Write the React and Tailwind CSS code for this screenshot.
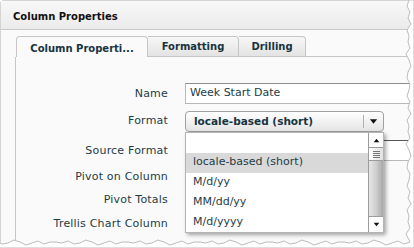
import React from "react";

const FONT = { fontFamily: '"DejaVu Sans", Verdana, sans-serif' };

const LABELS = [
  { text: "Source Format", cls: "h-[21px] mt-[8px]" },
  { text: "Pivot on Column", cls: "h-[20px] mt-[6px]" },
  { text: "Pivot Totals", cls: "h-[20px] mt-[3px]" },
  { text: "Trellis Chart Column", cls: "h-[20px] mt-[4px]" },
];

const OPTIONS = ["", "locale-based (short)", "M/d/yy", "MM/dd/yy", "M/d/yyyy"];

function jaggedPath() {
  // deterministic torn edge along right and bottom
  const right = [];
  const xs = [409, 407, 410, 408, 411, 407, 409, 408, 410, 406, 409, 411, 408, 407, 410];
  for (let i = 0; i <= 40; i++) {
    right.push(`${xs[i % xs.length]} ${i * 6}`);
  }
  const bottom = [];
  const ys = [242, 244, 241, 243, 245, 242, 240, 243, 244, 241, 243, 242];
  for (let i = 0; i <= 70; i++) {
    bottom.push(`${410 - i * 6} ${ys[i % ys.length]}`);
  }
  return `M414 0 L${right.join(" L")} L${bottom.join(" L")} L0 248 L414 248 Z`;
}

function Arrow({ up = false, size = "small" }) {
  const w = size === "small" ? 7 : 9;
  return (
    <svg width={w} height={w - 2} viewBox="0 0 10 7" className="block">
      {up ? <path d="M5 1 L9 6 L1 6 Z" fill="#111" /> : <path d="M1 1 L9 1 L5 6 Z" fill="#111" />}
    </svg>
  );
}

export default function App() {
  return (
    <div className="relative w-[414px] h-[248px] overflow-hidden bg-white" style={FONT}>
      <div className="h-full border-l border-t border-[#d4d4d4] rounded-tl-[4px] bg-[#fafafa] flex flex-col">
        {/* header */}
        <div className="h-[29px] shrink-0 flex items-center pl-[12px] pt-[2px] bg-gradient-to-b from-[#f8f8f8] to-[#ebebeb] border-b border-[#c9c9c9]">
          <span className="text-[10px] font-bold text-[#111]">Column Properties</span>
        </div>

        {/* tabs */}
        <div className="flex items-end pt-[5px] pl-[15px] h-[27px] shrink-0">
          <div className="h-[21px] w-[132px] flex items-center justify-center pt-[2px] bg-[#fafafa] border border-b-0 border-[#c6c6c6] rounded-t-[4px] text-[10px] font-bold text-[#17343f]">
            Column Properti...
          </div>
          <div className="h-[21px] w-[91px] flex items-center justify-center bg-gradient-to-b from-[#f7f7f7] to-[#e3e3e3] border border-l-0 border-[#c6c6c6] rounded-tr-[4px] text-[10px] font-bold text-[#17343f]">
            Formatting
          </div>
          <div className="h-[21px] w-[67px] flex items-center justify-center bg-gradient-to-b from-[#f7f7f7] to-[#e3e3e3] border border-l-0 border-[#c6c6c6] rounded-tr-[4px] text-[10px] font-bold text-[#17343f]">
            Drilling
          </div>
          <div className="flex-1 h-[21px] border-b border-[#c6c6c6]" />
        </div>

        {/* panel */}
        <div className="relative flex-1 ml-[14px] border-l border-[#c6c6c6] pt-[26px]">
          <div className="flex flex-col text-[11px] text-[#1e3c46] tracking-[0.2px]">
            <div className="flex items-center h-[21px]">
              <span className="w-[152px] text-right shrink-0 pt-[1px]">Name</span>
              <div className="ml-[17px] flex-1 h-[21px] bg-white border border-[#b8b8b8] border-t-[#8e8e8e] flex items-center pl-[4px] tracking-normal">
                Week Start Date
              </div>
            </div>
            <div className="flex items-center h-[21px] mt-[7px]">
              <span className="w-[152px] text-right shrink-0 -mt-[1px]">Format</span>
              <div className="ml-[17px] w-[199px] h-[21px] rounded-[4px] border border-[#a0a0a0] bg-gradient-to-b from-white to-[#e4e4e4] flex items-center tracking-normal">
                <span className="flex-1 pl-[8px] font-bold text-[10.5px] text-[#17343f]">locale-based (short)</span>
                <div className="w-px h-[13px] bg-[#b0b0b0]" />
                <div className="w-[19px] flex items-center justify-center">
                  <Arrow size="big" />
                </div>
              </div>
            </div>
            {LABELS.map((l, i) => (
              <div key={l.text} className={`flex items-center ${l.cls}`}>
                <span className="w-[152px] text-right shrink-0 pt-[1px]">{l.text}</span>
                {i === 0 && (
                  <div className="ml-[17px] flex-1 h-[21px] bg-white border border-[#b8b8b8] border-t-[#555]" />
                )}
              </div>
            ))}
          </div>

          {/* open dropdown list */}
          <div className="absolute left-[169px] top-[75px] w-[199px] h-[101px] bg-white border border-[#b4b4b4] shadow-[2px_2px_4px_rgba(0,0,0,0.35)] flex text-[11px] text-[#1e3c46]">
            <div className="flex-1 flex flex-col">
              {OPTIONS.map((o, i) => (
                <div
                  key={i}
                  className={`h-[20px] flex items-center pl-[7px] ${i === 1 ? "bg-[#d9d9d9]" : ""}`}
                >
                  {o}
                </div>
              ))}
            </div>
            <div className="w-[15px] flex flex-col border-l border-[#9c9c9c] bg-gradient-to-r from-[#e6e6e6] via-[#cfcfcf] to-[#a9a9a9]">
              <div className="h-[15px] bg-white border-b border-[#9c9c9c] flex items-center justify-center">
                <Arrow up />
              </div>
              <div className="h-[13px] bg-gradient-to-r from-white to-[#e0e0e0] border-b border-[#9c9c9c] flex flex-col items-center justify-center gap-[1px]">
                <div className="w-[7px] h-px bg-[#777]" />
                <div className="w-[7px] h-px bg-[#777]" />
                <div className="w-[7px] h-px bg-[#777]" />
                <div className="w-[7px] h-px bg-[#777]" />
              </div>
              <div className="flex-1" />
              <div className="h-[16px] bg-white border-t border-[#9c9c9c] flex items-center justify-center">
                <Arrow />
              </div>
            </div>
          </div>
        </div>
      </div>

      {/* torn paper edge */}
      <svg className="absolute inset-0 pointer-events-none" width="414" height="248" viewBox="0 0 414 248">
        <path d={jaggedPath()} fill="white" stroke="#bdbdbd" strokeWidth="1" />
      </svg>
    </div>
  );
}
